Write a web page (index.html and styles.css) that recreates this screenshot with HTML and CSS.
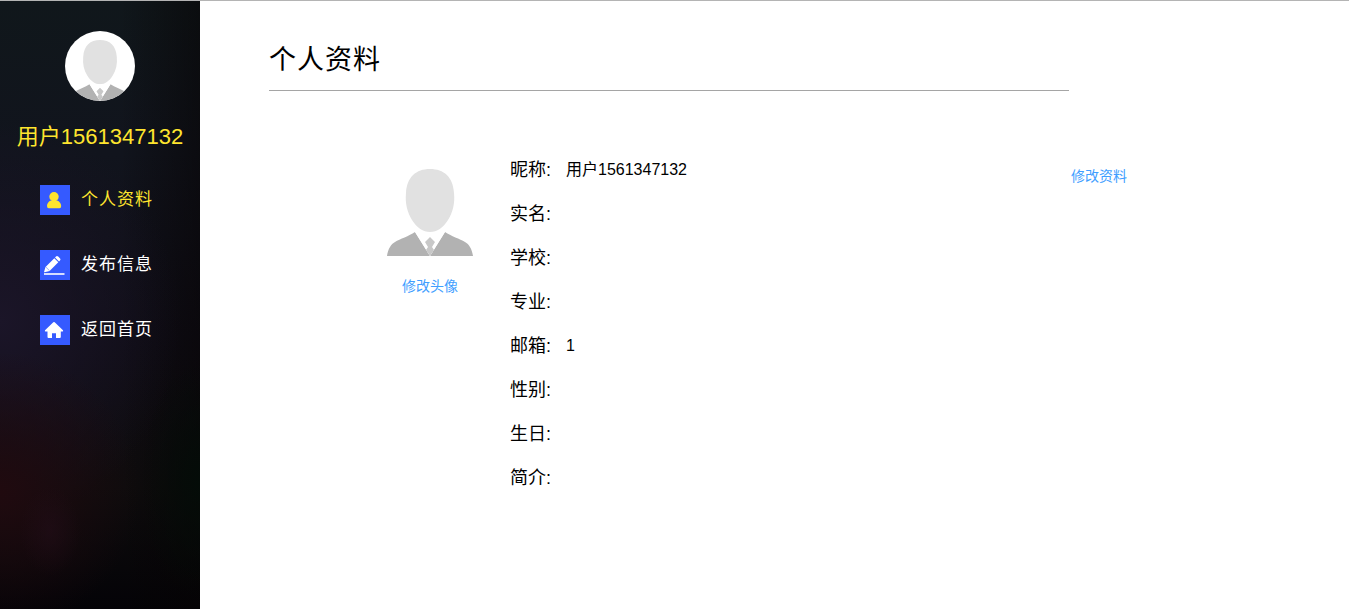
FILE: index.html
```html
<!DOCTYPE html>
<html lang="zh-CN">
<head>
<meta charset="utf-8">
<meta name="viewport" content="width=device-width, initial-scale=1">
<title>个人资料</title>
<link rel="stylesheet" href="styles.css">
</head>
<body>
<svg class="symbols" width="0" height="0" aria-hidden="true">
  <symbol id="person" viewBox="0 0 100 100">
    <rect width="100" height="100" fill="#fff"/>
    <path fill="#e1e1e1" d="M50 13C64 13 73 21 74 37C75 47 73 56 68 64C63 72 57 76 50 76C43 76 37 72 32 64C27 56 25 47 26 37C27 21 36 13 50 13Z"/>
    <path fill="#b2b2b2" d="M7 100C8 93 11 88 15 86C20 83 29 80 35 76L50 100L65 76C71 80 80 83 85 86C89 88 92 93 93 100Z"/>
    <path fill="#fff" d="M35 76L50 100L65 76Z"/>
    <path fill="#c8c8c8" d="M50 81L55 86L52 91L54 94L50 100L46 94L48 91L45 86Z"/>
  </symbol>
</svg>
<div class="page">
  <aside class="sidebar">
    <svg class="sidebar-avatar" role="img" aria-label="头像"><use href="#person"/></svg>
    <p class="sidebar-name">用户1561347132</p>
    <nav class="menu">
      <a class="menu-item active" href="#profile">
        <svg class="menu-icon" viewBox="0 0 30 30" aria-hidden="true"><circle cx="14" cy="11.800" r="4.700" fill="currentColor"/><path fill="currentColor" d="M11 15.500H17C19.500 16.300 21.200 18.600 21.200 21Q21.200 23.300 19.500 23.300H8.700Q7 23.300 7 21C7 18.600 8.500 16.300 11 15.500Z"/></svg>
        <span>个人资料</span>
      </a>
      <a class="menu-item" href="#publish">
        <svg class="menu-icon" viewBox="0 0 30 30" aria-hidden="true"><path fill="currentColor" d="M16 6.500Q17 5.500 18.200 6.600L20.100 8.500Q21 9.500 20 10.500L19 11.500L15 7.500ZM14.300 8.200L18.300 12.200L9.600 20.900L4.500 22.200Q4 22.300 4.100 21.800L5.500 17Z"/><path stroke="#355aff" stroke-width=".5" d="M5.800 17L9.500 20.700"/><path fill="currentColor" d="M4 23.200H24.500V24.800H4Z"/></svg>
        <span>发布信息</span>
      </a>
      <a class="menu-item" href="#home">
        <svg class="menu-icon" viewBox="0 0 30 30" aria-hidden="true"><path fill="currentColor" d="M13.300 7.300Q14 6.700 14.700 7.300L23 15.200Q23.500 16.500 22.500 16.500H20.800V22Q20.800 23 19.800 23H16V18.300H12V23H8.500Q7.500 23 7.500 22V16.500H5.500Q4.500 16.500 5 15.200Z"/></svg>
        <span>返回首页</span>
      </a>
    </nav>
  </aside>
  <main class="content" id="profile">
    <h1 class="title">个人资料</h1>
    <section class="profile">
      <div class="portrait">
        <svg class="portrait-image" role="img" aria-label="头像"><use href="#person"/></svg>
        <a class="link" href="#avatar">修改头像</a>
      </div>
      <dl class="details">
        <div class="row"><dt>昵称:</dt><dd>用户1561347132</dd></div>
        <div class="row"><dt>实名:</dt><dd></dd></div>
        <div class="row"><dt>学校:</dt><dd></dd></div>
        <div class="row"><dt>专业:</dt><dd></dd></div>
        <div class="row"><dt>邮箱:</dt><dd>1</dd></div>
        <div class="row"><dt>性别:</dt><dd></dd></div>
        <div class="row"><dt>生日:</dt><dd></dd></div>
        <div class="row"><dt>简介:</dt><dd></dd></div>
      </dl>
      <a class="link edit" href="#edit">修改资料</a>
    </section>
  </main>
</div>
</body>
</html>
```
FILE: styles.css
```css
* {
  box-sizing: border-box;
}

body {
  margin: 0;
  background: #fff;
  color: #000;
  font-family: "Liberation Sans", "Noto Sans CJK SC", sans-serif;
}

a {
  color: inherit;
  text-decoration: none;
}

.symbols {
  display: block;
}

.page {
  display: flex;
  min-height: 100vh;
  border-top: 1px solid #b4b4b4;
}

.sidebar {
  flex: 0 0 200px;
  padding-top: 30px;
  background:
    radial-gradient(ellipse 30px 45px at 50px 530px, rgba(36, 14, 26, .5), transparent),
    radial-gradient(ellipse 140px 140px at 0 490px, #200a0f, transparent),
    radial-gradient(ellipse 180px 200px at 0 320px, #1b1528, transparent),
    radial-gradient(ellipse 60px 120px at 200px 480px, #040c08, transparent),
    linear-gradient(90deg, transparent 60%, rgba(6, 3, 3, .5)),
    linear-gradient(#10171b, #11141d 25%, #0f0d16 55%, #0e0c0d 80%, #040307);
  color: #fff;
}

.sidebar-avatar {
  display: block;
  width: 70px;
  height: 70px;
  margin: 0 auto;
  border-radius: 50%;
}

.sidebar-name {
  margin: 21px 0 0;
  color: #ffe52e;
  font-size: 22px;
  line-height: 30px;
  text-align: center;
}

.menu {
  display: grid;
  gap: 35px;
  padding: 33px 0 0 40px;
}

.menu-item {
  display: flex;
  gap: 11px;
  font-size: 17px;
  line-height: 30px;
  letter-spacing: 1px;
}

.menu-item.active {
  color: #ffe52e;
}

.menu-icon {
  width: 30px;
  height: 30px;
  background: #355aff;
}

.content {
  flex: 1;
  padding: 39px 69px 40px;
}

.title {
  max-width: 800px;
  margin: 0;
  padding-bottom: 10px;
  border-bottom: 1px solid #a5a5a5;
  font-size: 27px;
  font-weight: 400;
  line-height: 40px;
  letter-spacing: 1px;
}

.profile {
  display: flex;
  align-items: flex-start;
  max-width: 858px;
  padding: 57px 0 0 111px;
}

.portrait {
  display: grid;
  justify-items: center;
  gap: 20px;
  padding-top: 8px;
}

.portrait-image {
  width: 100px;
  height: 100px;
}

.link {
  color: #409eff;
  font-size: 14px;
  line-height: 20px;
}

.details {
  flex: 1;
  margin: 0 0 0 30px;
}

.row {
  display: flex;
  gap: 15px;
  line-height: 44px;
}

.row dt {
  font-size: 18px;
}

.row dd {
  margin: 0;
  font-size: 16px;
}

.edit {
  margin-top: 18px;
}
```
